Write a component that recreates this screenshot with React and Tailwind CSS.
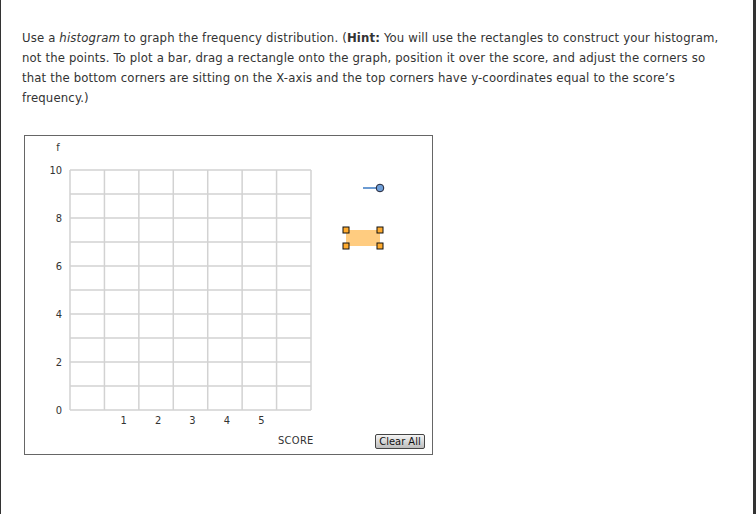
import React from "react";

const cols = 7;
const rows = 10;
const gx = 45;
const gy = 34;
const gw = 241;
const gh = 240;

const Graph = () => {
  const cw = gw / cols;
  const rh = gh / rows;
  return (
    <svg width="406" height="294" className="block font-['DejaVu_Sans_Condensed','DejaVu_Sans',sans-serif]">
      {Array.from({ length: cols + 1 }).map((_, i) => (
        <line key={"v" + i} x1={gx + i * cw} y1={gy} x2={gx + i * cw} y2={gy + gh} stroke="#d2d2d2" strokeWidth="1.5" />
      ))}
      {Array.from({ length: rows + 1 }).map((_, i) => (
        <line key={"h" + i} x1={gx} y1={gy + i * rh} x2={gx + gw} y2={gy + i * rh} stroke="#d2d2d2" strokeWidth="1.5" />
      ))}
      <text x="33" y="15" fontSize="11" fill="#333" textAnchor="middle">f</text>
      {[10, 8, 6, 4, 2, 0].map((v, i) => (
        <text key={v} x="37" y={gy + i * rh * 2 + 4} fontSize="11" fill="#333" textAnchor="end">{v}</text>
      ))}
      {[1, 2, 3, 4, 5].map((v, i) => (
        <text key={v} x={gx + (i + 1) * cw + cw / 2 + 2} y="288" fontSize="11" fill="#333" textAnchor="middle">{v}</text>
      ))}

      {/* point tool */}
      <line x1="338" y1="52" x2="354" y2="52" stroke="#6c9bd2" strokeWidth="2" />
      <circle cx="355" cy="52" r="3.8" fill="#6f9fd8" stroke="#223" strokeWidth="1" />

      {/* rectangle tool */}
      <rect x="321" y="94" width="34" height="16" fill="#ffcc80" />
      {[[321, 94], [355, 94], [321, 110], [355, 110]].map(([x, y], i) => (
        <rect key={i} x={x - 3} y={y - 3} width="6" height="6" fill="#ffab2e" stroke="#111" strokeWidth="1" />
      ))}
    </svg>
  );
};

const App = () => {
  return (
    <div className="w-[756px] h-[514px] bg-white border-l border-r-[3px] border-[#333] overflow-hidden">
      <p className="pl-[21px] pr-[20px] pt-[28px] text-[13px] leading-[20px] text-[#333] tracking-[0.15px] font-['DejaVu_Sans_Condensed','DejaVu_Sans',sans-serif]">
        Use a <i>histogram</i> to graph the frequency distribution. (<b>Hint:</b> You will use the rectangles to construct your histogram, not the points. To plot a bar, drag a rectangle onto the graph, position it over the score, and adjust the corners so that the bottom corners are sitting on the X-axis and the top corners have y-coordinates equal to the score’s frequency.)
      </p>

      <div className="ml-[23px] mt-[27px] w-[409px] h-[320px] border border-[#666] flex flex-col">
        <Graph />
        <div className="flex items-center h-[22px] pl-[253px] pr-[7px] font-['DejaVu_Sans_Condensed','DejaVu_Sans',sans-serif]">
          <span className="text-[11px] text-[#333] tracking-[0.3px]">SCORE</span>
          <button className="ml-auto w-[50px] h-[15px] text-[11px] leading-none text-[#111] border border-[#444] rounded-[2px] bg-gradient-to-b from-[#f4f4f4] to-[#bdbdbd]">
            Clear All
          </button>
        </div>
      </div>
    </div>
  );
};

export default App;
